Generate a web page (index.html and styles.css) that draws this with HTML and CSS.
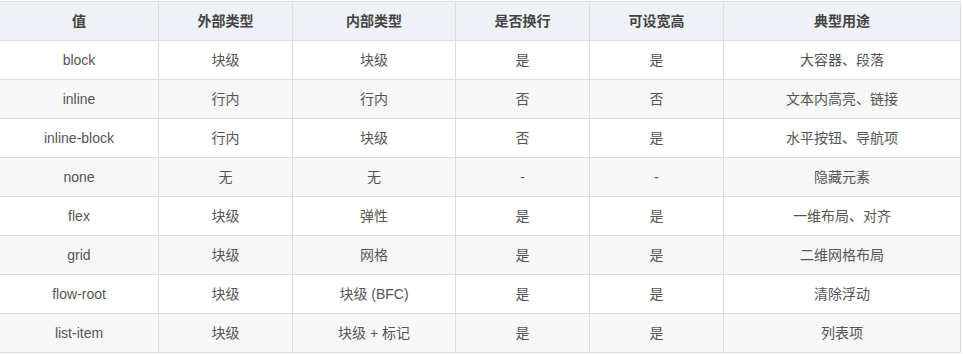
FILE: index.html
```html
<!DOCTYPE html>
<html lang="zh-CN">
<head>
<meta charset="utf-8">
<link rel="stylesheet" href="styles.css">
</head>
<body>
<table class="display-table">
  <colgroup>
    <col class="c1"><col class="c2"><col class="c3"><col class="c4"><col class="c5"><col class="c6">
  </colgroup>
  <thead>
    <tr><th>值</th><th>外部类型</th><th>内部类型</th><th>是否换行</th><th>可设宽高</th><th>典型用途</th></tr>
  </thead>
  <tbody>
    <tr><td>block</td><td>块级</td><td>块级</td><td>是</td><td>是</td><td>大容器、段落</td></tr>
    <tr><td>inline</td><td>行内</td><td>行内</td><td>否</td><td>否</td><td>文本内高亮、链接</td></tr>
    <tr><td>inline-block</td><td>行内</td><td>块级</td><td>否</td><td>是</td><td>水平按钮、导航项</td></tr>
    <tr><td>none</td><td>无</td><td>无</td><td>-</td><td>-</td><td>隐藏元素</td></tr>
    <tr><td>flex</td><td>块级</td><td>弹性</td><td>是</td><td>是</td><td>一维布局、对齐</td></tr>
    <tr><td>grid</td><td>块级</td><td>网格</td><td>是</td><td>是</td><td>二维网格布局</td></tr>
    <tr><td>flow-root</td><td>块级</td><td>块级 (BFC)</td><td>是</td><td>是</td><td>清除浮动</td></tr>
    <tr><td>list-item</td><td>块级</td><td>块级 + 标记</td><td>是</td><td>是</td><td>列表项</td></tr>
  </tbody>
</table>
</body>
</html>
```
FILE: styles.css
```css
html, body {
  margin: 0;
  padding: 0;
  background: #fff;
}
body {
  font-family: "Liberation Sans", "Noto Sans CJK SC", sans-serif;
  font-size: 14px;
  color: #555;
}
.display-table {
  margin: 1px 0 0 -1px;
  border-collapse: collapse;
  table-layout: fixed;
  width: 961px;
}
.c1 { width: 159px; }
.c2 { width: 134px; }
.c3 { width: 163px; }
.c4 { width: 134px; }
.c5 { width: 134px; }
.c6 { width: 237px; }
.display-table th,
.display-table td {
  border: 1px solid #dddddd;
  height: 39px;
  padding: 0 8px;
  box-sizing: border-box;
  text-align: center;
  vertical-align: middle;
  line-height: 18px;
}
.display-table th {
  background: #eef1f5;
  color: #444;
  font-weight: bold;
}
.display-table tbody tr:nth-child(even) td {
  background: #f7f7f7;
}
```
